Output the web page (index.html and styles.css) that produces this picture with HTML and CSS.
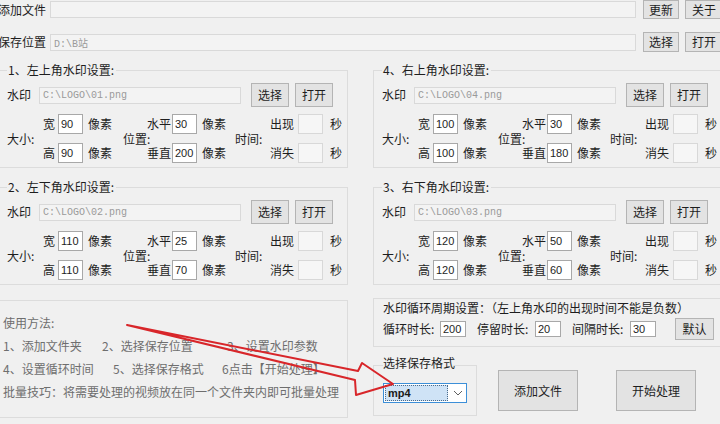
FILE: index.html
```html
<!DOCTYPE html>
<html lang="zh-CN">
<head>
  <meta charset="UTF-8">
  <meta name="viewport" content="width=device-width, initial-scale=1.0">
  <title>视频批量加水印</title>
  <link rel="stylesheet" href="styles.css">
</head>
<body>
  <div class="app">
    <div class="top-row">
      <span class="top-label">添加文件</span>
      <input class="field" type="text" readonly>
      <button class="btn top-btn">更新</button>
      <button class="btn top-btn last">关于</button>
    </div>
    <div class="top-row second">
      <span class="top-label">保存位置</span>
      <input class="field path" type="text" value="D:\B站" readonly>
      <button class="btn top-btn">选择</button>
      <button class="btn top-btn last">打开</button>
    </div>

    <div class="main">
      <div class="col">
        <section class="group">
          <div class="group-title">1、左上角水印设置:</div>
          <div class="wm-row">
            <span class="wm-label">水印</span>
            <input class="field path" type="text" value="C:\LOGO\01.png" readonly>
            <button class="btn wm-btn">选择</button>
            <button class="btn wm-btn">打开</button>
          </div>
          <div class="size-grid">
            <span class="span2">大小:</span>
            <span>宽</span><input class="num" value="90"><span class="unit">像素</span>
            <span class="span2">位置:</span>
            <span>水平</span><input class="num" value="30"><span class="unit">像素</span>
            <span class="span2">时间:</span>
            <span>出现</span><input class="num blank"><span class="sec">秒</span>
            <span>高</span><input class="num" value="90"><span class="unit">像素</span>
            <span>垂直</span><input class="num" value="200"><span class="unit">像素</span>
            <span>消失</span><input class="num blank"><span class="sec">秒</span>
          </div>
        </section>

        <section class="group">
          <div class="group-title">2、左下角水印设置:</div>
          <div class="wm-row">
            <span class="wm-label">水印</span>
            <input class="field path" type="text" value="C:\LOGO\02.png" readonly>
            <button class="btn wm-btn">选择</button>
            <button class="btn wm-btn">打开</button>
          </div>
          <div class="size-grid">
            <span class="span2">大小:</span>
            <span>宽</span><input class="num" value="110"><span class="unit">像素</span>
            <span class="span2">位置:</span>
            <span>水平</span><input class="num" value="25"><span class="unit">像素</span>
            <span class="span2">时间:</span>
            <span>出现</span><input class="num blank"><span class="sec">秒</span>
            <span>高</span><input class="num" value="110"><span class="unit">像素</span>
            <span>垂直</span><input class="num" value="70"><span class="unit">像素</span>
            <span>消失</span><input class="num blank"><span class="sec">秒</span>
          </div>
        </section>

        <div class="usage">
          <div>使用方法:</div>
          <div class="steps steps-a">
            <span>1、添加文件夹</span><span>2、选择保存位置</span><span>3、设置水印参数</span>
          </div>
          <div class="steps steps-b">
            <span>4、设置循环时间</span><span>5、选择保存格式</span><span>6点击【开始处理】</span>
          </div>
          <div>批量技巧：将需要处理的视频放在同一个文件夹内即可批量处理</div>
        </div>
      </div>

      <div class="col">
        <section class="group">
          <div class="group-title">4、右上角水印设置:</div>
          <div class="wm-row">
            <span class="wm-label">水印</span>
            <input class="field path" type="text" value="C:\LOGO\04.png" readonly>
            <button class="btn wm-btn">选择</button>
            <button class="btn wm-btn">打开</button>
          </div>
          <div class="size-grid">
            <span class="span2">大小:</span>
            <span>宽</span><input class="num" value="100"><span class="unit">像素</span>
            <span class="span2">位置:</span>
            <span>水平</span><input class="num" value="30"><span class="unit">像素</span>
            <span class="span2">时间:</span>
            <span>出现</span><input class="num blank"><span class="sec">秒</span>
            <span>高</span><input class="num" value="100"><span class="unit">像素</span>
            <span>垂直</span><input class="num" value="180"><span class="unit">像素</span>
            <span>消失</span><input class="num blank"><span class="sec">秒</span>
          </div>
        </section>

        <section class="group">
          <div class="group-title">3、右下角水印设置:</div>
          <div class="wm-row">
            <span class="wm-label">水印</span>
            <input class="field path" type="text" value="C:\LOGO\03.png" readonly>
            <button class="btn wm-btn">选择</button>
            <button class="btn wm-btn">打开</button>
          </div>
          <div class="size-grid">
            <span class="span2">大小:</span>
            <span>宽</span><input class="num" value="120"><span class="unit">像素</span>
            <span class="span2">位置:</span>
            <span>水平</span><input class="num" value="50"><span class="unit">像素</span>
            <span class="span2">时间:</span>
            <span>出现</span><input class="num blank"><span class="sec">秒</span>
            <span>高</span><input class="num" value="120"><span class="unit">像素</span>
            <span>垂直</span><input class="num" value="60"><span class="unit">像素</span>
            <span>消失</span><input class="num blank"><span class="sec">秒</span>
          </div>
        </section>

        <div class="loop">
          <div>水印循环周期设置：（左上角水印的出现时间不能是负数）</div>
          <div class="loop-row">
            <span class="loop-lbl">循环时长:</span><input class="num loop-num" value="200">
            <span class="loop-lbl next">停留时长:</span><input class="num loop-num" value="20">
            <span class="loop-lbl next">间隔时长:</span><input class="num loop-num" value="30">
            <button class="btn reset-btn">默认</button>
          </div>
        </div>

        <div class="output">
          <div class="format">
            <div class="group-title flat">选择保存格式</div>
            <div class="combo">
              <span class="combo-value">mp4</span>
              <svg class="combo-arrow" width="10" height="6" viewBox="0 0 10 6">
                <path d="M1 1 L5 5 L9 1" fill="none" stroke="#606060" stroke-width="1"/>
              </svg>
            </div>
          </div>
          <button class="btn big-btn">添加文件</button>
          <button class="btn big-btn second-big">开始处理</button>
        </div>
      </div>
    </div>
  </div>

  <!-- red hint arrow pointing at the format box -->
  <svg class="hint-arrow" width="720" height="424" viewBox="0 0 720 424">
    <polygon points="127,325 358,371 362,363 393,384 356,395 355,380"
             fill="none" stroke="#d8262a" stroke-width="2" stroke-linejoin="round"/>
  </svg>
</body>
</html>
```

FILE: styles.css
```css
body {
  margin: 0;
  width: 720px;
  height: 424px;
  overflow: hidden;
  position: relative;
  background: #f0f0f0;
  color: #1e1e1e;
  font: 12px/16px "Noto Sans CJK SC", sans-serif;
}

.app {
  margin-left: -2px;
  width: 725px;
}

/* shared controls */
.field {
  box-sizing: border-box;
  height: 17px;
  margin: 0;
  padding: 0 3px;
  border: 1px solid #d9d9d9;
  background: #f3f3f3;
  outline: none;
}

.path {
  font: 10px/15px "Liberation Mono", "Noto Sans CJK SC", monospace;
  color: #9a9a9a;
}

.btn {
  box-sizing: border-box;
  margin: 0;
  padding: 0;
  border: 1px solid #b4b4b4;
  background: #e3e3e3;
  color: #1e1e1e;
  font: 12px/16px "Noto Sans CJK SC", sans-serif;
}

.num {
  box-sizing: border-box;
  width: 25px;
  height: 20px;
  margin: 0;
  padding: 0 0 0 2px;
  border: 1px solid #a8a8a8;
  background: #fff;
  color: #1e1e1e;
  font: 11px "Liberation Sans", sans-serif;
  outline: none;
}

.num.blank {
  border-color: #d8d8d8;
  background: #f6f6f6;
}

/* top rows */
.top-row {
  display: flex;
  align-items: center;
  height: 19px;
}

.top-row.second {
  height: 20px;
  margin-top: 13px;
}

.top-label {
  width: 48px;
  margin-right: 4px;
  white-space: nowrap;
}

.top-row .field {
  flex: 1;
}

.top-btn {
  width: 36px;
  height: 100%;
  margin-left: 7px;
}

.top-btn.last {
  width: 38px;
  margin-left: 6px;
}

/* watermark groups */
.main {
  display: grid;
  grid-template-columns: 350px 350px;
  column-gap: 25px;
  margin-top: 18px;
}

.group {
  border: 1px solid #dcdcdc;
  padding: 0 14px 4px 8px;
}

.group + .group {
  margin-top: 19px;
}

.group-title {
  width: fit-content;
  margin: -9px 0 0 0;
  padding: 0 2px 0 1px;
  background: #f0f0f0;
  white-space: nowrap;
}

.wm-row {
  display: flex;
  align-items: center;
  height: 24px;
  margin-top: 5px;
}

.wm-label {
  width: 24px;
  margin-right: 8px;
}

.wm-row .field {
  flex: 1;
}

.wm-btn {
  width: 38px;
  height: 24px;
  margin-left: 10px;
}

.wm-btn + .wm-btn {
  margin-left: 6px;
}

.size-grid {
  display: grid;
  grid-template-columns: 36px 15px 25px 40px 24px 25px 25px 38px 35px 28px 25px 1fr;
  grid-template-rows: 20px 20px;
  row-gap: 9px;
  align-items: center;
  margin-top: 7px;
  white-space: nowrap;
}

.span2 {
  grid-row: span 2;
}

.unit {
  padding-left: 5px;
}

.sec {
  padding-left: 7px;
}

/* usage notes */
.usage {
  height: 98px;
  margin-top: 15px;
  padding: 10px 4px 8px;
  border: 1px solid #dcdcdc;
  color: #6e6e6e;
  line-height: 23px;
  white-space: nowrap;
}

.steps {
  display: grid;
}

.steps-a {
  grid-template-columns: 99px 125px auto;
}

.steps-b {
  grid-template-columns: 110px 109px auto;
}

/* loop settings */
.loop {
  margin-top: 13px;
  padding: 1px 8px 6px 9px;
  border: 1px solid #dcdcdc;
  white-space: nowrap;
}

.loop-row {
  display: flex;
  align-items: center;
  height: 22px;
  margin-top: 2px;
}

.loop-lbl {
  width: 57px;
}

.loop-lbl.next {
  width: 58px;
  margin-left: 11px;
}

.loop-num {
  width: 26px;
  height: 16px;
}

.reset-btn {
  width: 39px;
  height: 22px;
  margin-left: 19px;
}

/* output format and actions */
.output {
  display: flex;
  align-items: flex-start;
  margin-top: 18px;
}

.format {
  box-sizing: border-box;
  width: 104px;
  padding: 0 9px 12px 9px;
  border: 1px solid #dcdcdc;
}

.group-title.flat {
  margin-top: -11px;
  padding: 0;
}

.combo {
  box-sizing: border-box;
  display: flex;
  align-items: center;
  width: 84px;
  height: 20px;
  margin-top: 12px;
  border: 1px solid #3c8fd8;
  background: #fff;
}

.combo-value {
  box-sizing: border-box;
  width: 63px;
  height: 16px;
  margin-left: 1px;
  padding-left: 2px;
  border: 1px dotted #4a6a8a;
  background: #cfe3f6;
  font: bold 11px/14px "Liberation Sans", sans-serif;
  color: #1a1a1a;
}

.combo-arrow {
  margin-left: 5px;
}

.big-btn {
  width: 80px;
  height: 41px;
  margin-top: 5px;
  margin-left: 21px;
}

.big-btn.second-big {
  margin-left: 38px;
}

.hint-arrow {
  position: absolute;
  left: 0;
  top: 0;
  pointer-events: none;
}
```
